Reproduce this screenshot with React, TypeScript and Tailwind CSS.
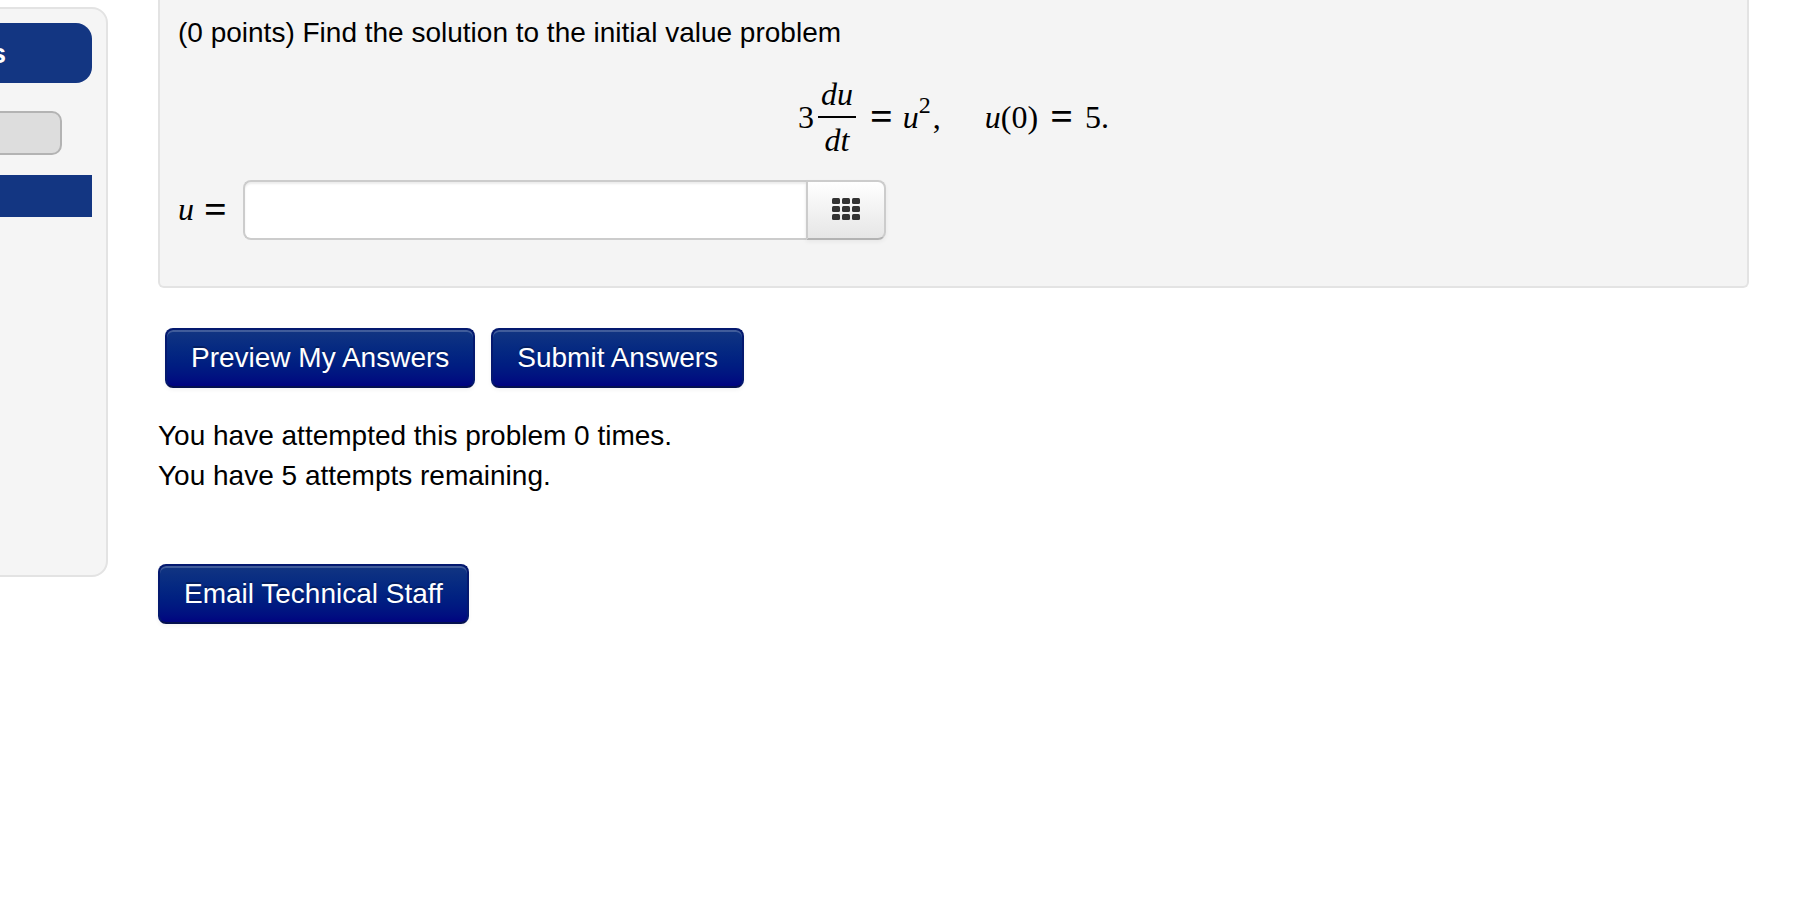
import type { ReactNode } from "react";

const ActionButton = ({ children }: { children: ReactNode }) => {
  return (
    <button
      type="button"
      className="h-15 px-6 rounded-lg border-2 border-[#04196f] border-b-[#04104f] bg-linear-to-b from-[#133682] to-[#000080] bg-origin-border text-white text-[28px] leading-10 [text-shadow:0_-2px_0_rgba(0,0,0,0.25)] shadow-[inset_0_2px_0_rgba(255,255,255,0.2),0_2px_4px_rgba(0,0,0,0.05)] cursor-pointer"
    >
      {children}
    </button>
  );
};

const Equals = () => <span className="text-[40px] leading-10 font-bold">=</span>;

const Sidebar = () => {
  return (
    <aside className="w-[408px] h-[570px] -ml-[300px] mt-[7px] shrink-0 rounded-2xl border-2 border-[#e3e3e3] bg-[#f5f5f5] px-3.5 pt-3.5">
      <h2 className="h-15 rounded-2xl bg-[#133682] pr-[86px] text-right text-[28px] leading-[62px] font-bold text-white">s</h2>
      <button
        type="button"
        aria-label="Menu"
        className="block mt-7 w-[346px] h-11 rounded-[10px] border-2 border-[#b3b3b3] bg-[#dddddd]"
      ></button>
      <nav>
        <a href="#" aria-label="Current page" className="block mt-5 h-[42px] bg-[#133682]"></a>
      </nav>
    </aside>
  );
};

const Equation = () => {
  return (
    <div className="flex items-center justify-center h-20 mt-6 font-['Liberation_Serif',serif] text-[32px] leading-10">
      <span>3</span>
      <span className="flex flex-col items-center ml-1 mr-3.5 italic">
        <span className="h-11 px-[3px] pt-0.5">du</span>
        <span className="w-full h-0.5 bg-black"></span>
        <span className="h-11 pt-0.5">dt</span>
      </span>
      <Equals />
      <span className="ml-2.5 italic">u</span>
      <sup className="text-2xl">2</sup>
      <span className="ml-0.5">,</span>
      <span className="ml-11">
        <i>u</i>(0)
      </span>
      <span className="mx-3 flex">
        <Equals />
      </span>
      <span>5.</span>
    </div>
  );
};

const KeypadIcon = () => {
  return (
    <svg width="28" height="22" viewBox="0 0 28 22" fill="#333333" aria-hidden="true">
      {[0, 8, 16].map((y) =>
        [0, 10, 20].map((x) => <rect key={`${x}-${y}`} x={x} y={y} width="8" height="6" rx="1.5" />)
      )}
    </svg>
  );
};

const Problem = () => {
  return (
    <section className="h-72 rounded-b-md border-2 border-t-0 border-[#e3e3e3] bg-[#f4f4f4] px-[18px] pt-[13px]">
      <p>(0 points) Find the solution to the initial value problem</p>
      <Equation />
      <div className="flex items-center mt-[23px]">
        <label htmlFor="answer" className="flex items-center w-[65px] gap-2.5 font-['Liberation_Serif',serif] text-[32px] leading-10">
          <i className="pb-0.5">u</i>
          <Equals />
        </label>
        <input
          id="answer"
          type="text"
          className="w-[563px] h-15 px-3 rounded-l-lg border-2 border-r-0 border-[#cccccc] bg-white outline-none shadow-[inset_0_2px_2px_rgba(0,0,0,0.075)]"
        />
        <button
          type="button"
          aria-label="Equation editor"
          className="flex items-center justify-center w-20 h-15 pb-0.5 rounded-r-lg border-2 border-[#cccccc] border-b-[#b3b3b3] bg-linear-to-b from-white to-[#e6e6e6] shadow-[0_2px_4px_rgba(0,0,0,0.05)] cursor-pointer"
        >
          <KeypadIcon />
        </button>
      </div>
    </section>
  );
};

const App = () => {
  return (
    <div className="flex items-start min-h-screen overflow-hidden bg-white text-black font-['Liberation_Sans',Arial,sans-serif] text-[28px] leading-10">
      <Sidebar />
      <main className="flex-1 ml-[50px] mr-[57px]">
        <Problem />
        <div className="flex gap-4 mt-10 ml-[7px]">
          <ActionButton>Preview My Answers</ActionButton>
          <ActionButton>Submit Answers</ActionButton>
        </div>
        <p className="mt-7">
          You have attempted this problem 0 times.
          <br />
          You have 5 attempts remaining.
        </p>
        <div className="mt-17">
          <ActionButton>Email Technical Staff</ActionButton>
        </div>
      </main>
    </div>
  );
};

export default App;
